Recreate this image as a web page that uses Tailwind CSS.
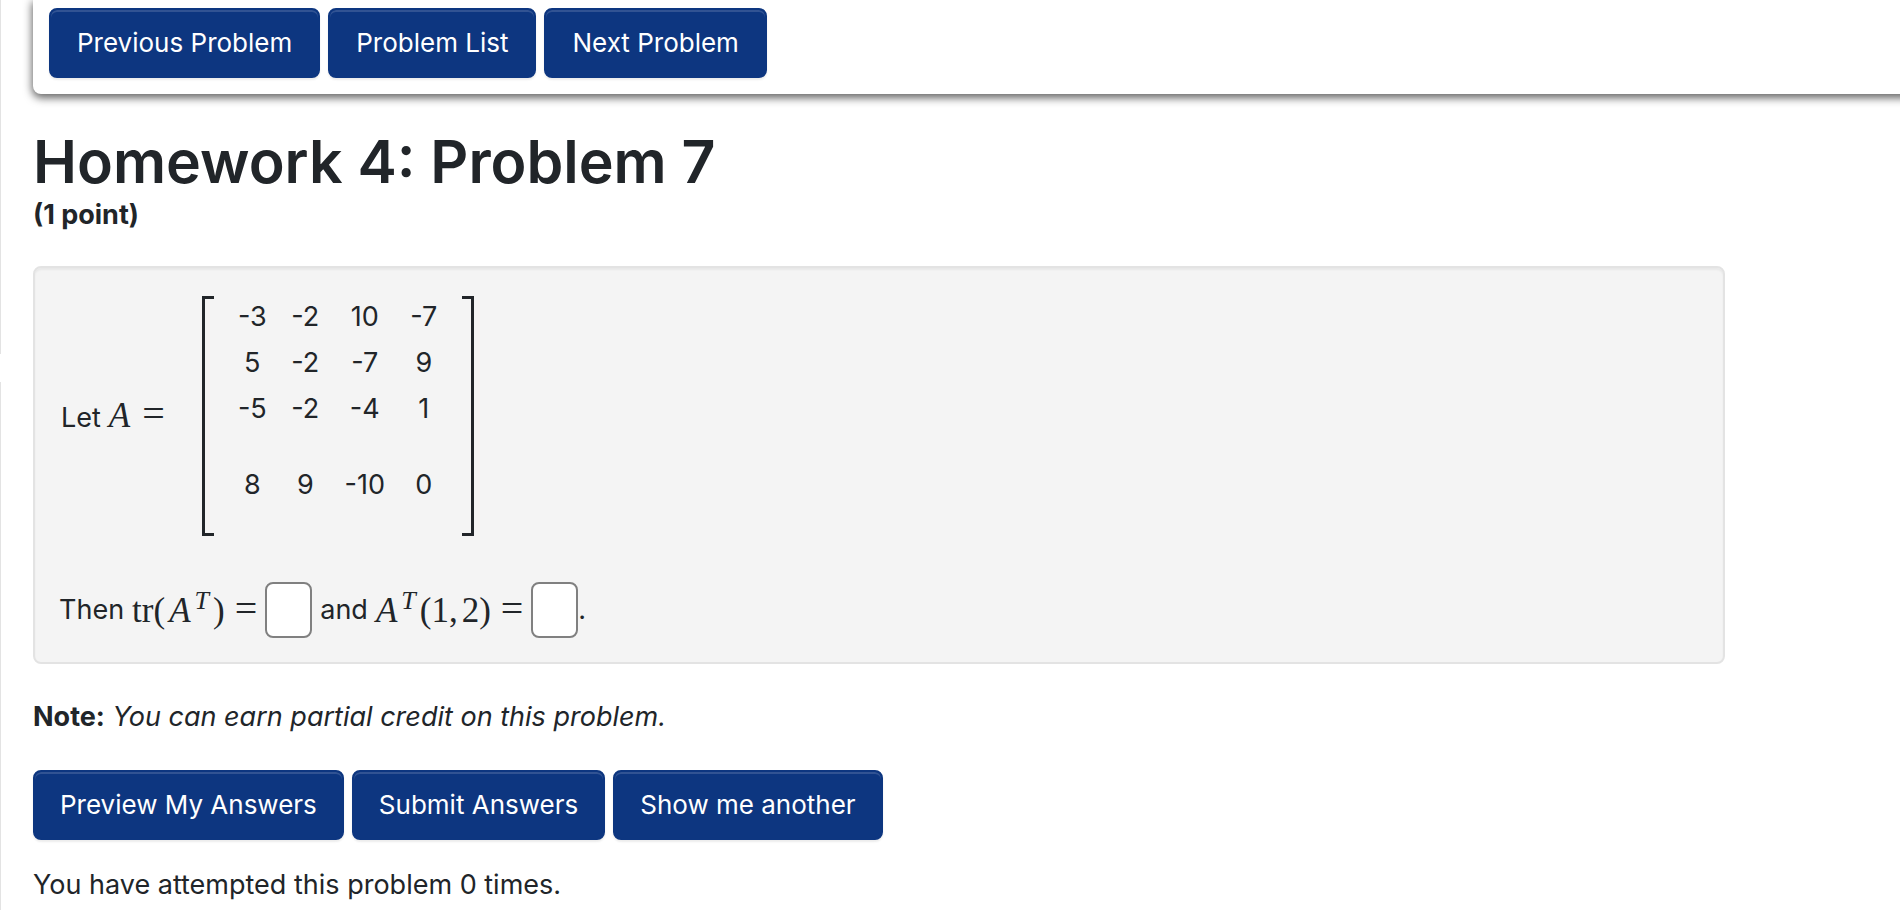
<!DOCTYPE html>
<html lang="en">
<head>
  <meta charset="UTF-8" />
  <title>Homework 4: Problem 7</title>
  <meta name="viewport" content="width=device-width, initial-scale=1.0" />
  <script src="https://cdn.jsdelivr.net/npm/@tailwindcss/browser@4"></script>
</head>
<body class="flex min-h-screen overflow-x-hidden bg-white font-['Inter',sans-serif] text-[27px] leading-[42px] text-[#212529]">
  <!-- Sidebar edge -->
  <div class="flex w-px shrink-0 flex-col">
    <div class="h-[354px] bg-[#e3e3e3]"></div>
    <div class="h-7"></div>
    <div class="flex-1 bg-[#e3e3e3]"></div>
  </div>

  <div class="min-w-0 flex-1 pl-8">
    <!-- Problem navigation -->
    <nav class="-mr-4 flex gap-2 rounded-bl-lg px-4 pt-2 pb-4 text-[26px] shadow-[0_3px_8px_1px_#666]">
      <a href="#" class="rounded-lg border-2 border-[#0d3680] bg-[#0d3680] px-[26px] py-3 text-white shadow-[inset_0_2px_0_rgba(255,255,255,0.15),0_2px_2px_rgba(0,0,0,0.075)]">Previous Problem</a>
      <a href="#" class="rounded-lg border-2 border-[#0d3680] bg-[#0d3680] px-[26px] py-3 text-white shadow-[inset_0_2px_0_rgba(255,255,255,0.15),0_2px_2px_rgba(0,0,0,0.075)]">Problem List</a>
      <a href="#" class="rounded-lg border-2 border-[#0d3680] bg-[#0d3680] px-[26px] py-3 text-white shadow-[inset_0_2px_0_rgba(255,255,255,0.15),0_2px_2px_rgba(0,0,0,0.075)]">Next Problem</a>
    </nav>

    <main>
      <h1 class="mt-8 text-[59px] leading-[72px] font-semibold">Homework 4: Problem 7</h1>
      <p class="-mt-1 font-bold">(1 point)</p>

      <form>
        <!-- Problem body -->
        <section class="mt-[30px] mr-[175px] rounded-lg border-2 border-[#e3e3e3] bg-[#f4f4f4] px-6 pt-[26px] pb-6 shadow-[inset_0_2px_2px_rgba(0,0,0,0.05)]">
          <div class="flex items-center">
            <div class="mr-[37px] ml-[2px] flex items-baseline gap-2">
              <span>Let</span>
              <span class="flex items-baseline gap-3 font-['Liberation_Serif',serif] text-[35px]"><i>A</i><span class="text-[40px] leading-none">=</span></span>
            </div>
            <div class="my-[2px] w-3 self-stretch border-y-[3px] border-l-[3px] border-[#212529]"></div>
            <table class="mx-3 text-center">
              <tbody>
                <tr class="h-[46px]"><td class="w-[53px]">-3</td><td class="w-[53px]">-2</td><td class="w-[66px]">10</td><td class="w-[52px]">-7</td></tr>
                <tr class="h-[46px]"><td>5</td><td>-2</td><td>-7</td><td>9</td></tr>
                <tr class="h-[46px]"><td>-5</td><td>-2</td><td>-4</td><td>1</td></tr>
                <tr class="h-[106px]"><td>8</td><td>9</td><td>-10</td><td>0</td></tr>
              </tbody>
            </table>
            <div class="my-[2px] w-3 self-stretch border-y-[3px] border-r-[3px] border-[#212529]"></div>
          </div>

          <div class="mt-11 flex items-center">
            <span>Then</span>
            <label for="trace" class="ml-2 flex items-baseline font-['Liberation_Serif',serif] text-[35px]">tr(<i class="ml-1">A</i><sup class="ml-1 text-[26px] italic">T</sup><span class="ml-1">)</span><span class="ml-[10px] text-[40px] leading-none">=</span></label>
            <input id="trace" type="text" class="ml-2 h-14 w-[47px] rounded-lg border-2 border-[#808080] bg-white px-2" />
            <span class="ml-2">and</span>
            <label for="entry" class="ml-2 flex items-baseline font-['Liberation_Serif',serif] text-[35px]"><i>A</i><sup class="ml-1 text-[26px] italic">T</sup><span class="ml-1">(1,</span><span class="ml-1">2)</span><span class="ml-[10px] text-[40px] leading-none">=</span></label>
            <input id="entry" type="text" class="ml-2 h-14 w-[47px] rounded-lg border-2 border-[#808080] bg-white px-2" />
            <span>.</span>
          </div>
        </section>

        <p class="mt-8"><b>Note:</b> <i>You can earn partial credit on this problem.</i></p>

        <div class="mt-8 flex gap-2 text-[26px]">
          <button type="button" class="rounded-lg border-2 border-[#0d3680] bg-[#0d3680] px-[25px] py-3 text-white shadow-[inset_0_2px_0_rgba(255,255,255,0.15),0_2px_2px_rgba(0,0,0,0.075)]">Preview My Answers</button>
          <button type="submit" class="rounded-lg border-2 border-[#0d3680] bg-[#0d3680] px-[25px] py-3 text-white shadow-[inset_0_2px_0_rgba(255,255,255,0.15),0_2px_2px_rgba(0,0,0,0.075)]">Submit Answers</button>
          <button type="button" class="rounded-lg border-2 border-[#0d3680] bg-[#0d3680] px-[25px] py-3 text-white shadow-[inset_0_2px_0_rgba(255,255,255,0.15),0_2px_2px_rgba(0,0,0,0.075)]">Show me another</button>
        </div>
      </form>

      <p class="mt-6">You have attempted this problem 0 times.</p>
    </main>
  </div>
</body>
</html>
